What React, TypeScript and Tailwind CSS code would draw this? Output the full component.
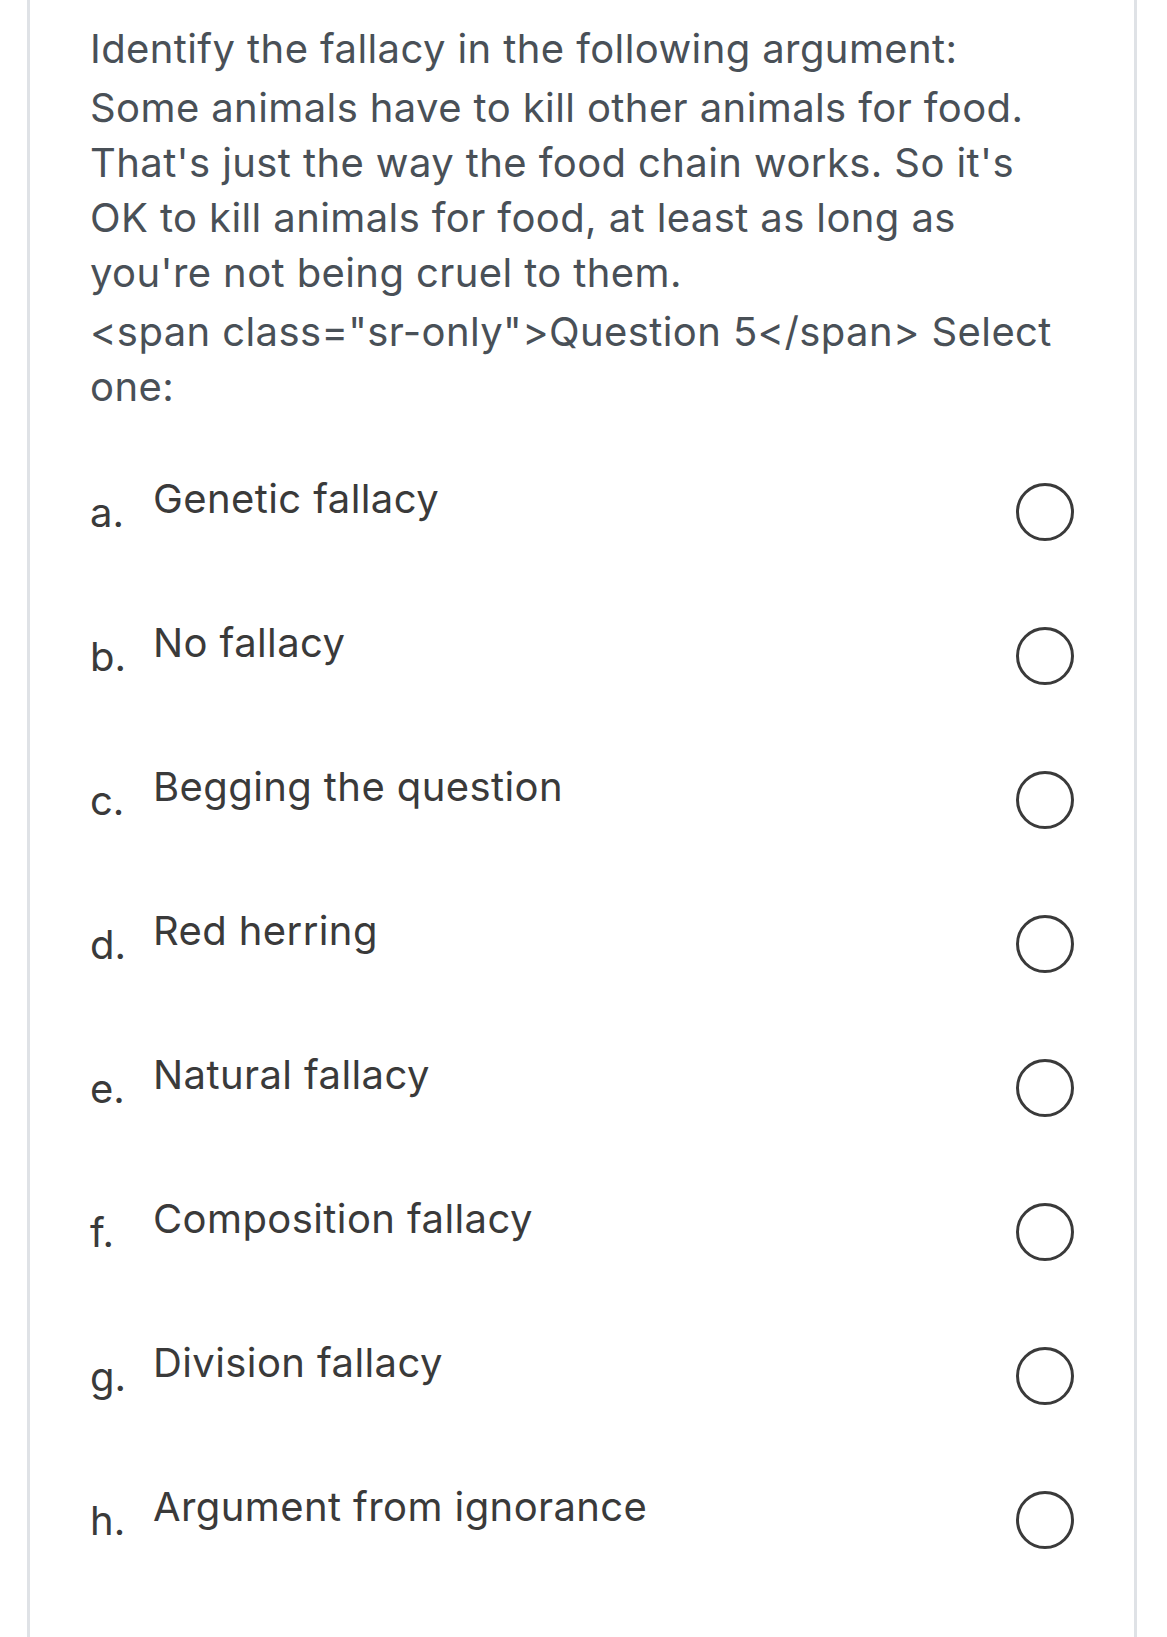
const options = [
  { letter: 'a.', text: 'Genetic fallacy' },
  { letter: 'b.', text: 'No fallacy' },
  { letter: 'c.', text: 'Begging the question' },
  { letter: 'd.', text: 'Red herring' },
  { letter: 'e.', text: 'Natural fallacy' },
  { letter: 'f.', text: 'Composition fallacy' },
  { letter: 'g.', text: 'Division fallacy' },
  { letter: 'h.', text: 'Argument from ignorance' },
]

export default function App() {
  return (
    <div className="min-h-screen bg-white font-['Inter','Noto_Sans',sans-serif]">
      <div className="ml-[27px] w-[1110px] min-h-[1637px] border-x-[3px] border-[#dfe2e6] pl-[60px] pr-[60px] pt-[21px]">
        {/* Question */}
        <div className="text-[40px] leading-[55px] text-[#495057] tracking-[0.01em]">
          <p>Identify the fallacy in the following argument:</p>
          <p className="mt-[4px]">
            Some animals have to kill other animals for food.
            <br />
            That's just the way the food chain works. So it's
            <br />
            OK to kill animals for food, at least as long as
            <br />
            you're not being cruel to them.
          </p>
          <p className="mt-[4px]">
            {'<span class="sr-only">Question 5</span> Select'}
            <br />
            one:
          </p>
        </div>

        {/* Answers */}
        <div className="mt-[26px]">
          {options.map((o) => (
            <div key={o.letter} className="flex items-center h-[144px]">
              <div className="flex-1 flex items-center">
                <span className="w-[63px] text-[40px] leading-[55px] text-[#3a3a3a]">{o.letter}</span>
                <span className="mb-[28px] text-[40px] leading-[55px] text-[#3a3a3a] tracking-[0.01em]">{o.text}</span>
              </div>
              <div className="w-[58px] h-[58px] rounded-full border-[3px] border-[#3a3a3a]" />
            </div>
          ))}
        </div>
      </div>
    </div>
  )
}
